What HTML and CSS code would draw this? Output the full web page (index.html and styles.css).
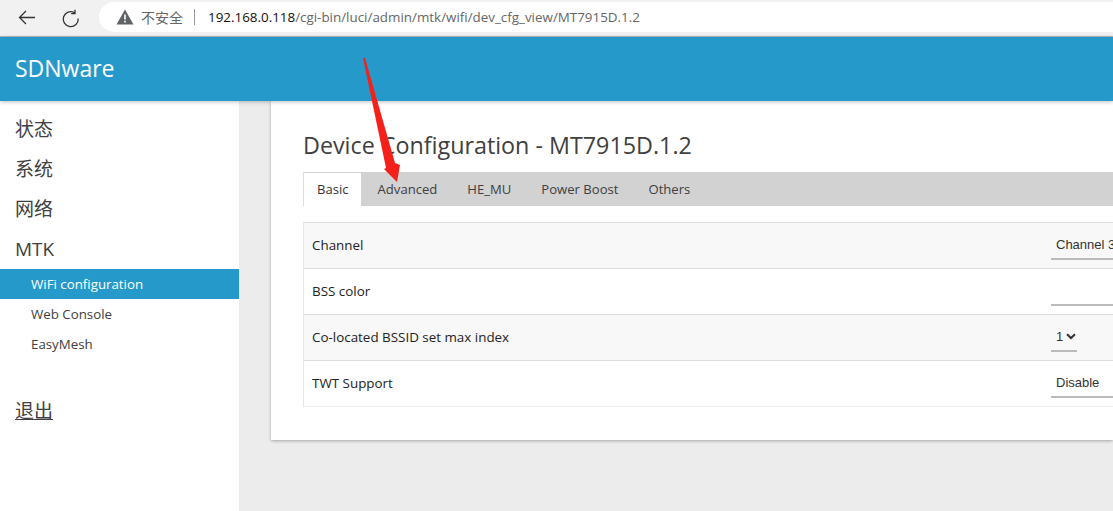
FILE: index.html
```html
<!DOCTYPE html>
<html lang="zh">
<head>
<meta charset="utf-8">
<title>Device Configuration</title>
<link rel="stylesheet" href="styles.css">
</head>
<body>
<div class="toolbar">
  <div class="nav-icons">
    <svg class="nav-icon" width="20" height="20" viewBox="0 0 20 20"><path d="M18 8.500H2.500M9 2L2.500 8.500L9 15" fill="none" stroke="#333" stroke-width="1.300"/></svg>
    <svg class="nav-icon" width="20" height="20" viewBox="0 0 20 20"><path d="M17.200 9A7.500 7.500 0 1 1 13.500 3.200M14 0.300V4.100H10.200" transform="translate(0 0.500)" fill="none" stroke="#333" stroke-width="1.300"/></svg>
  </div>
  <div class="omnibox">
    <svg class="warn" width="18" height="16" viewBox="0 0 18 16"><path d="M9 0.500L17.500 15.500H0.500Z" fill="#5f6368"/><path d="M8.200 5.500H9.800V10.600H8.200ZM8.200 11.800H9.800V13.400H8.200Z" fill="#fff"/></svg>
    <span class="insecure">不安全</span>
    <span class="divider"></span>
    <span class="url"><span class="host">192.168.0.118</span>/cgi-bin/luci/admin/mtk/wifi/dev_cfg_view/MT7915D.1.2</span>
  </div>
</div>
<header class="brandbar"><a class="brand">SDNware</a></header>
<div class="layout">
  <nav class="sidebar">
    <ul class="menu">
      <li class="menu-top">状态</li>
      <li class="menu-top">系统</li>
      <li class="menu-top">网络</li>
      <li class="menu-top">MTK</li>
      <li class="menu-sub active">WiFi configuration</li>
      <li class="menu-sub">Web Console</li>
      <li class="menu-sub">EasyMesh</li>
      <li class="menu-top logout"><u>退出</u></li>
    </ul>
  </nav>
  <main class="content">
    <section class="card">
      <h2 class="title">Device Configuration - MT7915D.1.2</h2>
      <div class="tabs">
        <span class="tab current">Basic</span>
        <span class="tab">Advanced</span>
        <span class="tab">HE_MU</span>
        <span class="tab">Power Boost</span>
        <span class="tab">Others</span>
      </div>
      <div class="table">
        <div class="row odd"><span class="label">Channel</span><span class="control channel">Channel 3</span></div>
        <div class="row"><span class="label">BSS color</span><span class="control wide"></span></div>
        <div class="row odd"><span class="label">Co-located BSSID set max index</span><span class="control small">1<svg class="chev" width="10" height="7" viewBox="0 0 10 7"><path d="M1 1.200L5 5L9 1.200" fill="none" stroke="#333" stroke-width="2"/></svg></span></div>
        <div class="row last"><span class="label">TWT Support</span><span class="control wide">Disable</span></div>
      </div>
    </section>
  </main>
</div>
<svg class="arrow" width="1113" height="511" viewBox="0 0 1113 511"><polygon points="363,58 365,58 395,163 400,165 397,182 384,169 386,168" fill="#f5201a"/></svg>
</body>
</html>
```

FILE: styles.css
```css
* { box-sizing: border-box; }
html, body { margin: 0; padding: 0; height: 511px; overflow: hidden; }
body {
  position: relative;
  width: 1113px;
  background: #ececec;
  color: #404040;
  font-family: "Open Sans", "Noto Sans CJK SC", sans-serif;
}
.toolbar {
  height: 37px;
  display: flex;
  align-items: flex-start;
  background: #f1f1f1;
  border-bottom: 1px solid #b5b5b5;
  padding-top: 2px;
}
.nav-icons {
  display: flex;
  gap: 24px;
  width: 99px;
  padding: 7px 0 0 17px;
}
.nav-icons .nav-icon { display: block; }
.omnibox {
  flex: 1;
  height: 30px;
  display: flex;
  align-items: center;
  background: #fff;
  border-radius: 15px 0 0 15px;
  padding-left: 17px;
}
.warn { margin-right: 7px; }
.insecure { font-size: 14px; color: #666; }
.divider { width: 1px; height: 16px; background: #999; margin: 0 13px 0 11px; }
.url { font-size: 13.400px; color: #666; white-space: nowrap; }
.host { color: #111; }
.brandbar {
  position: relative;
  height: 64px;
  background: #2699cb;
  box-shadow: 0 1px 4px rgba(0, 0, 0, .25);
  display: flex;
  align-items: center;
  padding: 0 0 3px 15px;
}
.brand { color: #fff; font-size: 23px; }
.layout { display: flex; height: 410px; }
.sidebar { width: 239px; flex: none; background: #fff; }
.menu { list-style: none; margin: 0; padding: 8px 0 0; }
.menu-top { height: 40px; line-height: 41px; padding-left: 15px; font-size: 19px; }
.menu-sub { height: 30px; line-height: 30px; padding-left: 31px; font-size: 13.300px; }
.menu-sub.active { background: #2699cb; color: #fff; }
.logout { margin-top: 32px; }
.content { flex: 1; min-width: 0; padding-left: 32px; }
.card {
  width: 842px;
  height: 339px;
  background: #fff;
  box-shadow: 0 1px 3px rgba(0, 0, 0, .3);
  padding: 28px 0 0 32px;
}
.title { margin: 0; height: 43px; line-height: 32px; font-size: 23.300px; font-weight: 400; color: #404040; }
.tabs {
  display: flex;
  height: 34px;
  background: #d2d2d2;
  border-left: 1px solid #ddd;
  padding-top: 1px;
}
.tab { padding: 0 15px; line-height: 32px; font-size: 13.100px; color: #404040; }
.tab.current { background: #fff; padding: 0 12px 0 13px; margin-right: 2px; color: #333; }
.table {
  margin-top: 16px;
  border-left: 1px solid #e6e6e6;
}
.row {
  height: 46px;
  display: flex;
  align-items: flex-start;
  background: #fff;
  border-top: 1px solid #ddd;
  padding: 0 0 0 8px;
}
.row.odd { background: #f8f8f8; }
.row.last { height: 47px; border-bottom: 1px solid #eee; }
.label { width: 739px; flex: none; line-height: 44px; font-size: 13.400px; color: #222; }
.control {
  display: flex;
  align-items: center;
  height: 30px;
  margin-top: 7px;
  padding: 1px 0 0 5px;
  border-bottom: 2px solid #bbb;
  font-family: "Liberation Sans", sans-serif;
  font-size: 13px;
  color: #333;
  white-space: nowrap;
}
.control.wide { flex: 1; min-width: 0; }
.control.channel { flex: 1; min-width: 0; }
.control.small { width: 26px; }
.chev { margin-left: 3px; flex: none; }
.arrow { position: absolute; left: 0; top: 0; pointer-events: none; }
```
